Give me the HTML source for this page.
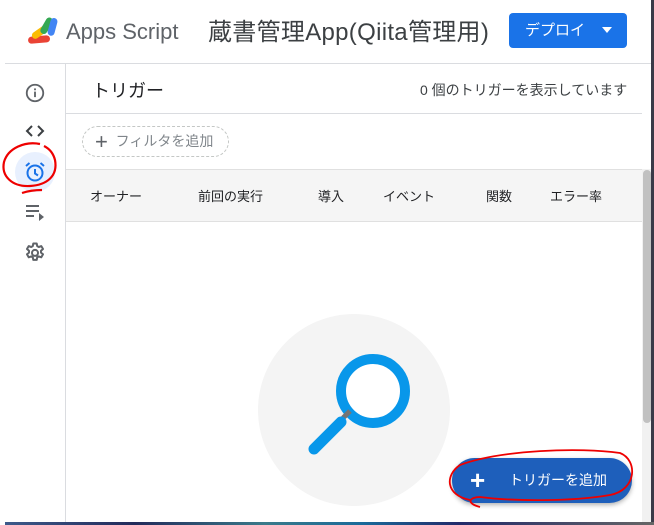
<!DOCTYPE html>
<html><head><meta charset="utf-8"><style>
*{margin:0;padding:0;box-sizing:border-box}
body{width:654px;height:525px;overflow:hidden;background:#fff;position:relative;font-family:"Liberation Sans","Noto Sans CJK JP",sans-serif;color:#202124}
.a{position:absolute}
</style></head><body>
<svg class="a" style="left:26px;top:16px" width="34" height="28" viewBox="0 0 34 28">
<rect x="2" y="20" width="22" height="7" rx="3.5" fill="#ea4335" transform="rotate(-5 13 23)"/>
<rect x="5" y="12" width="20" height="7" rx="3.5" fill="#fbbc04" transform="rotate(-35 15 16)"/>
<rect x="12" y="6" width="18" height="7" rx="3.5" fill="#34a853" transform="rotate(-60 21 10)"/>
<rect x="18" y="7" width="18" height="7" rx="3.5" fill="#4285f4" transform="rotate(-75 27 11)"/>
</svg>
<div class="a" style="left:66px;top:19px;font-size:22px;color:#5f6368">Apps Script</div>
<div class="a" style="left:208px;top:12px;font-size:24px;color:#3c4043;letter-spacing:0.3px">蔵書管理App(Qiita管理用)</div>
<div class="a" style="left:509px;top:13px;width:118px;height:35px;background:#1a73e8;border-radius:4px;color:#fff;font-size:15px;line-height:35px;padding-left:16px">デプロイ<span style="position:absolute;right:15px;top:14px;border-left:5px solid transparent;border-right:5px solid transparent;border-top:6px solid #fff"></span></div>
<div class="a" style="left:5px;top:63px;width:646px;height:1px;background:#dadce0"></div>
<div class="a" style="left:65px;top:64px;width:1px;height:458px;background:#dadce0"></div>
<svg class="a" style="left:24px;top:82px" width="22" height="22" viewBox="0 0 24 24"><circle cx="12" cy="12" r="9" fill="none" stroke="#5f6368" stroke-width="2"/><rect x="11" y="10.5" width="2" height="6" fill="#5f6368"/><rect x="11" y="7" width="2" height="2" fill="#5f6368"/></svg>
<svg class="a" style="left:24px;top:122px" width="22" height="18" viewBox="0 0 22 18"><path d="M8 4L3 9l5 5M14 4l5 5-5 5" fill="none" stroke="#3c4043" stroke-width="2"/></svg>
<div class="a" style="left:15px;top:152px;width:40px;height:40px;border-radius:50%;background:#e8f0fe"></div>
<svg class="a" style="left:23px;top:160px" width="24" height="24" viewBox="0 0 24 24"><circle cx="12" cy="13" r="7.5" fill="none" stroke="#1a73e8" stroke-width="2"/><path d="M12 9v4.5l3 2M3 6l3.5-3M21 6l-3.5-3" fill="none" stroke="#1a73e8" stroke-width="2"/></svg>
<svg class="a" style="left:25px;top:203px" width="22" height="18" viewBox="0 0 22 18"><path d="M1 3h13M1 8h13M1 13h8" stroke="#5f6368" stroke-width="2"/><path d="M14 10l5 4-5 4z" fill="#5f6368"/></svg>
<svg class="a" style="left:23px;top:241px" width="24" height="24" viewBox="0 0 24 24"><path fill="none" stroke="#5f6368" stroke-width="2" stroke-linejoin="round" d="M10.3 2.5h3.4l.5 2.6 1.6.9 2.5-.9 1.7 2.9-2 1.8v1.8l2 1.7-1.7 3-2.5-.9-1.6.9-.5 2.6h-3.4l-.5-2.6-1.6-.9-2.5.9-1.7-3 2-1.7V9.8l-2-1.8 1.7-2.9 2.5.9 1.6-.9z"/><circle cx="12" cy="11.9" r="3" fill="none" stroke="#5f6368" stroke-width="2"/></svg>
<svg class="a" style="left:0;top:138px" width="80" height="62" viewBox="0 0 80 62"><path d="M40 6C25 3 8 10 4 24C1 38 12 49 30 48C47 47 58 38 55 22C53 14 48 10 44 8M22 55c6-2 14-3 20-3" fill="none" stroke="#e00" stroke-width="2.2"/></svg>
<div class="a" style="left:92px;top:77px;font-size:18px">トリガー</div>
<div class="a" style="left:420px;top:80px;font-size:14px;color:#3c4043">0 個のトリガーを表示しています</div>
<div class="a" style="left:66px;top:113px;width:576px;height:1px;background:#dadce0"></div>
<div class="a" style="left:82px;top:126px;width:147px;height:31px;border:1px dashed #c4c7c5;border-radius:16px;font-size:14px;color:#80868b;line-height:29px;padding-left:12px"><span style="font-size:22px;vertical-align:-3px;color:#5f6368">+</span>&nbsp; フィルタを追加</div>
<div class="a" style="left:66px;top:169px;width:576px;height:53px;background:#f5f5f5;border-top:1px solid #e0e0e0;border-bottom:1px solid #e0e0e0;font-size:13px;color:#202124">
<span class="a" style="left:24px;top:16px">オーナー</span>
<span class="a" style="left:132px;top:16px">前回の実行</span>
<span class="a" style="left:252px;top:16px">導入</span>
<span class="a" style="left:317px;top:16px">イベント</span>
<span class="a" style="left:420px;top:16px">関数</span>
<span class="a" style="left:484px;top:16px">エラー率</span>
</div>
<div class="a" style="left:642px;top:169px;width:9px;height:353px;background:#f1f1f1"></div>
<div class="a" style="left:643px;top:170px;width:8px;height:253px;background:#c1c1c1;border-radius:4px"></div>
<div class="a" style="left:651px;top:0;width:3px;height:525px;background:#3a3a48"></div>
<div class="a" style="left:258px;top:314px;width:192px;height:192px;border-radius:50%;background:#f4f4f4"></div>
<svg class="a" style="left:300px;top:343px" width="120" height="120" viewBox="0 0 120 120"><circle cx="73" cy="48" r="32" fill="#fff" stroke="#0897ea" stroke-width="10"/><path d="M50 68l-7 7" stroke="#757575" stroke-width="5"/><path d="M41 79L14 106" stroke="#0897ea" stroke-width="11" stroke-linecap="round"/></svg>
<div class="a" style="left:452px;top:458px;width:180px;height:45px;border-radius:23px;background:#1e5fbb;box-shadow:0 2px 5px rgba(0,0,0,.3);color:#fff;font-size:14px;line-height:45px"><span class="a" style="left:18px;top:0;font-size:26px;font-weight:bold">+</span><span class="a" style="left:57px;top:0">トリガーを追加</span></div>
<svg class="a" style="left:440px;top:445px" width="200" height="70" viewBox="0 0 200 70"><path d="M30 55C5 50 5 30 20 20C60 5 140 2 180 8C198 15 197 45 170 50C130 57 70 56 40 52C30 52 25 58 40 62" fill="none" stroke="#e00" stroke-width="1.8"/></svg>
<div class="a" style="left:5px;top:522px;width:649px;height:3px;background:linear-gradient(90deg,#3d5a8a,#222a5a 20%,#3a7a8a 40%,#1a6a9a 55%,#222a6a 70%,#666 100%)"></div>
</body></html>
